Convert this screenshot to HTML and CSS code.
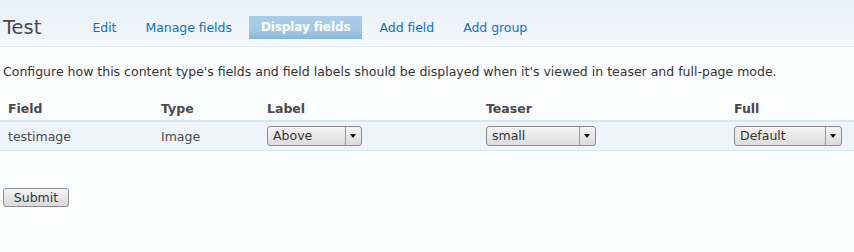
FILE: index.html
```html
<!DOCTYPE html>
<html>
<head>
<meta charset="utf-8">
<link rel="stylesheet" href="styles.css">
</head>
<body>
<div class="header">
  <h1 class="title">Test</h1>
  <ul class="tabs">
    <li><a href="#">Edit</a></li>
    <li><a href="#">Manage fields</a></li>
    <li class="active"><a href="#">Display fields</a></li>
    <li><a href="#">Add field</a></li>
    <li><a href="#">Add group</a></li>
  </ul>
</div>
<div class="content">
  <p class="desc">Configure how this content type's fields and field labels should be displayed when it's viewed in teaser and full-page mode.</p>
  <table class="fields">
    <thead>
      <tr>
        <th class="c-field">Field</th>
        <th class="c-type">Type</th>
        <th class="c-label">Label</th>
        <th class="c-teaser">Teaser</th>
        <th class="c-full">Full</th>
      </tr>
    </thead>
    <tbody>
      <tr>
        <td>testimage</td>
        <td>Image</td>
        <td><div class="select s-label"><span class="val">Above</span><span class="arrow"></span></div></td>
        <td><div class="select s-teaser"><span class="val">small</span><span class="arrow"></span></div></td>
        <td><div class="select s-full"><span class="val">Default</span><span class="arrow"></span></div></td>
      </tr>
    </tbody>
  </table>
  <button class="submit">Submit</button>
</div>
</body>
</html>
```
FILE: styles.css
```css
html, body {
  margin: 0;
  padding: 0;
  background: #fbfcfe;
  font-family: "DejaVu Sans", Verdana, sans-serif;
  font-size: 12.5px;
  color: #333;
}
.header {
  height: 47px;
  border-bottom: 1px solid #e3eaf1;
  background: linear-gradient(to bottom, #e7eff8, #f5f8fc);
  display: flex;
  align-items: flex-end;
  padding-left: 3px;
  box-sizing: border-box;
}
.title {
  margin: 0 39px 7px 0;
  font-size: 19.5px;
  font-weight: normal;
  color: #494949;
  line-height: 22px;
}
.tabs {
  list-style: none;
  margin: 0 0 7px 0;
  padding: 0;
  display: flex;
  gap: 5px;
}
.tabs li a {
  display: block;
  padding: 0 12px;
  height: 23px;
  line-height: 23px;
  color: #0a74c4;
  text-decoration: none;
  font-size: 12.5px;
  letter-spacing: -0.05px;
}
.tabs li.active a {
  background: linear-gradient(to bottom, #a9cde8 0%, #a4c9e5 60%, #86b6da 100%);
  color: #fff;
  font-weight: bold;
  font-size: 12px;
  letter-spacing: -0.1px;
}
.content {
  padding: 0;
}
.desc {
  margin: 17px 0 0 3px;
  line-height: 16px;
  color: #333;
}
.fields {
  border-collapse: collapse;
  width: 100%;
  margin-top: 16px;
}
.fields th {
  text-align: left;
  font-weight: bold;
  color: #494949;
  height: 24px;
  padding: 0;
  vertical-align: middle;
  border-bottom: 2px solid #d8e6f2;
}
.fields th.c-field, .fields td:first-child { padding-left: 8px; }
.c-field { width: 153px; }
.c-type { width: 106px; }
.c-label { width: 219px; }
.c-teaser { width: 248px; }
.fields td {
  background: #eef4fa;
  height: 28px;
  padding: 0;
  border-bottom: 1px solid #d8e6f2;
  color: #494949;
  vertical-align: middle;
}
.select {
  display: flex;
  height: 20px;
  box-sizing: border-box;
  border: 1px solid #8b8b8b;
  border-radius: 3px;
  background: linear-gradient(to bottom, #f4f4f4, #dcdcdc);
  color: #333;
  font-size: 12.5px;
}
.select .val {
  flex: 1;
  padding-left: 5px;
  line-height: 18px;
}
.select .arrow {
  width: 15px;
  border-left: 1px solid #9a9a9a;
  position: relative;
}
.select .arrow::after {
  content: "";
  position: absolute;
  left: 4px;
  top: 7px;
  border-left: 3.5px solid transparent;
  border-right: 3.5px solid transparent;
  border-top: 4px solid #111;
}
.s-label { width: 95px; }
.s-teaser { width: 110px; }
.s-full { width: 108px; }
.submit {
  margin: 37px 0 0 3px;
  width: 66px;
  height: 19px;
  border: 1px solid #8b8b8b;
  border-radius: 3px;
  background: linear-gradient(to bottom, #f4f4f4, #d9d9d9);
  font-family: "DejaVu Sans", Verdana, sans-serif;
  font-size: 12.5px;
  color: #333;
  padding: 0;
  display: block;
}
```
